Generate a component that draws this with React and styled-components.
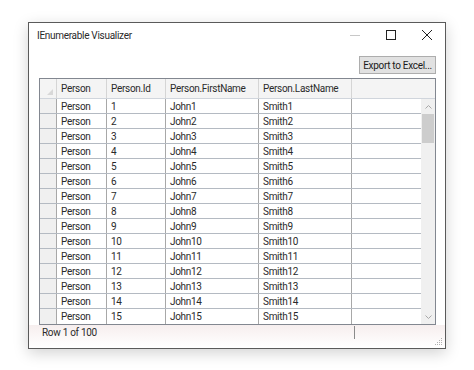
import React from 'react';
import styled, { createGlobalStyle } from 'styled-components';

const Global = createGlobalStyle`
  html, body { margin: 0; background: #fff; }
  body { font-family: Roboto, "Noto Sans", sans-serif; letter-spacing: -0.3px; }
`;

const columns = ['Person', 'Person.Id', 'Person.FirstName', 'Person.LastName'];
const rows = Array.from({ length: 15 }, (_, i) => ['Person', String(i + 1), `John${i + 1}`, `Smith${i + 1}`]);
const template = '17px 50px 59px 93px 93px 1fr';

export default function App() {
  return (
    <Page>
      <Global />
      <Window>
        <TitleBar>
          <Title>IEnumerable Visualizer</Title>
          <Controls>
            <CtrlButton>
              <svg width="10" height="10" viewBox="0 0 10 10">
                <path d="M0 5.5h10" stroke="#c8c8c8" strokeWidth="1" />
              </svg>
            </CtrlButton>
            <CtrlButton>
              <svg width="10" height="10" viewBox="0 0 10 10">
                <rect x="0.5" y="0.5" width="9" height="9" fill="none" stroke="#222" strokeWidth="1" />
              </svg>
            </CtrlButton>
            <CtrlButton>
              <svg width="10" height="10" viewBox="0 0 10 10">
                <path d="M0 0L10 10M10 0L0 10" stroke="#222" strokeWidth="1" />
              </svg>
            </CtrlButton>
          </Controls>
        </TitleBar>
        <Toolbar>
          <ExportButton>Export to Excel...</ExportButton>
        </Toolbar>
        <Grid>
          <HeaderRow>
            <Corner>
              <svg width="6" height="6" viewBox="0 0 6 6">
                <path d="M6 0V6H0Z" fill="#d8d8d8" />
              </svg>
            </Corner>
            {columns.map((c) => (
              <HeaderCell key={c}>{c}</HeaderCell>
            ))}
            <HeaderCell />
          </HeaderRow>
          <Body>
            <Rows>
              {rows.map((r, i) => (
                <Row key={i}>
                  <RowHeader />
                  {r.map((v, j) => (
                    <Cell key={j}>{v}</Cell>
                  ))}
                  <Cell />
                </Row>
              ))}
            </Rows>
            <ScrollBar>
              <Arrow>
                <svg width="7" height="4" viewBox="0 0 7 4">
                  <path d="M0.5 3.5L3.5 0.5L6.5 3.5" fill="none" stroke="#a8a8a8" strokeWidth="1" />
                </svg>
              </Arrow>
              <Track>
                <Thumb />
              </Track>
              <Arrow>
                <svg width="7" height="4" viewBox="0 0 7 4">
                  <path d="M0.5 0.5L3.5 3.5L6.5 0.5" fill="none" stroke="#a8a8a8" strokeWidth="1" />
                </svg>
              </Arrow>
            </ScrollBar>
          </Body>
        </Grid>
        <StatusBar>
          <StatusText>Row 1 of 100</StatusText>
          <Separator />
          <Grip>
            <svg width="8" height="8" viewBox="0 0 8 8">
              <g fill="#b0b0b0">
                <rect x="6" y="0" width="1" height="1" />
                <rect x="4" y="2" width="1" height="1" />
                <rect x="6" y="2" width="1" height="1" />
                <rect x="2" y="4" width="1" height="1" />
                <rect x="4" y="4" width="1" height="1" />
                <rect x="6" y="4" width="1" height="1" />
                <rect x="0" y="6" width="1" height="1" />
                <rect x="2" y="6" width="1" height="1" />
                <rect x="4" y="6" width="1" height="1" />
                <rect x="6" y="6" width="1" height="1" />
              </g>
            </svg>
          </Grip>
        </StatusBar>
      </Window>
    </Page>
  );
}

const Page = styled.div`
  padding: 22px 0 0 28px;
  height: 370px;
  box-sizing: border-box;
`;

const Window = styled.div`
  width: 418px;
  height: 327px;
  box-sizing: border-box;
  border: 1px solid #5a5a5a;
  background: #fff;
  box-shadow: 0 4px 14px rgba(0, 0, 0, 0.18);
  display: flex;
  flex-direction: column;
  padding: 0 9px 0 10px;
`;

const TitleBar = styled.div`
  height: 24px;
  display: flex;
  align-items: center;
  justify-content: space-between;
  margin: 0 -9px 0 -2px;
`;

const Title = styled.div`
  font-size: 10px;
  color: #2a2a2a;
`;

const Controls = styled.div`
  display: flex;
`;

const CtrlButton = styled.div`
  width: 36px;
  height: 24px;
  display: flex;
  align-items: center;
  justify-content: center;
`;

const Toolbar = styled.div`
  display: flex;
  justify-content: flex-end;
  padding: 9px 0 4px;
`;

const ExportButton = styled.div`
  height: 18px;
  width: 77px;
  box-sizing: border-box;
  border: 1px solid #adadad;
  background: #e1e1e1;
  font-size: 10px;
  color: #1a1a1a;
  white-space: nowrap;
  display: flex;
  align-items: center;
  justify-content: center;
`;

const Grid = styled.div`
  border: 1px solid #828790;
  display: flex;
  flex-direction: column;
  font-size: 10px;
  color: #2a2a2a;
`;

const HeaderRow = styled.div`
  display: grid;
  grid-template-columns: ${template};
  height: 19px;
  background: #f4f4f4;
  border-bottom: 1px solid #d0d5dc;
`;

const Corner = styled.div`
  border-right: 1px solid #d5d5d5;
  display: flex;
  align-items: flex-end;
  justify-content: flex-end;
  padding: 0 3px 3px 0;
`;

const HeaderCell = styled.div`
  border-right: 1px solid #d5d5d5;
  padding-left: 4px;
  display: flex;
  align-items: center;
  &:last-child { border-right: none; }
`;

const Body = styled.div`
  display: flex;
`;

const Rows = styled.div`
  flex: 1;
`;

const Row = styled.div`
  display: grid;
  grid-template-columns: ${template};
  height: 15px;
  box-sizing: border-box;
  border-bottom: 1px solid #b4bac2;
  &:last-child { border-bottom: none; }
`;

const RowHeader = styled.div`
  background: #f0f0f0;
  border-right: 1px solid #a8a8a8;
`;

const Cell = styled.div`
  border-right: 1px solid #a8a8a8;
  padding-left: 4px;
  display: flex;
  align-items: center;
  white-space: nowrap;
  &:last-child { border-right: none; }
`;

const ScrollBar = styled.div`
  width: 14px;
  background: #f0f0f0;
  display: flex;
  flex-direction: column;
`;

const Arrow = styled.div`
  height: 15px;
  display: flex;
  align-items: center;
  justify-content: center;
`;

const Track = styled.div`
  flex: 1;
`;

const Thumb = styled.div`
  height: 29px;
  margin: 0 1px;
  background: #cdcdcd;
`;

const StatusBar = styled.div`
  flex: 1;
  margin: 0 -9px 0 -10px;
  display: flex;
  align-items: flex-start;
  background: linear-gradient(#f6eeee, #fbf7f7 50%, #ffffff);
  position: relative;
`;

const StatusText = styled.div`
  font-size: 10px;
  color: #2a2a2a;
  padding: 2px 0 0 13px;
  width: 312px;
`;

const Separator = styled.div`
  width: 1px;
  height: 13px;
  margin-top: 1px;
  background: #8a8a8a;
`;

const Grip = styled.div`
  position: absolute;
  right: 2px;
  bottom: 2px;
  line-height: 0;
`;
